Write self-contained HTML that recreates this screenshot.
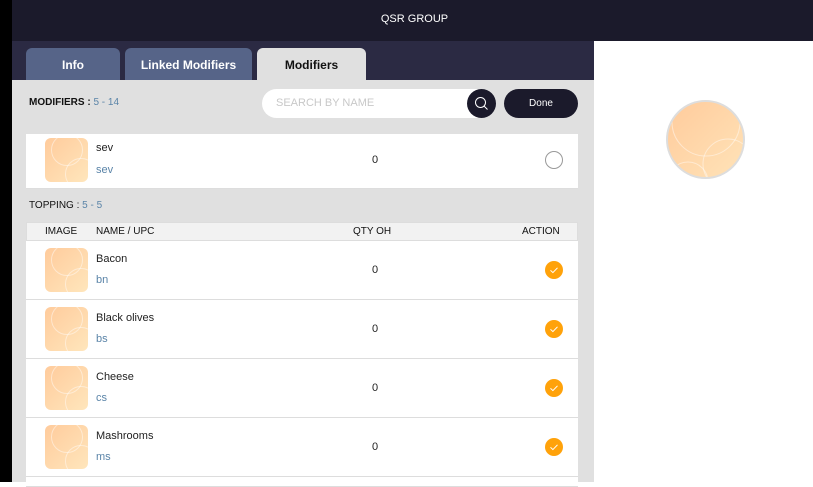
<!DOCTYPE html>
<html><head><style>
*{margin:0;padding:0;box-sizing:border-box}
body{width:813px;height:482px;overflow:hidden;background:#fff;font-family:"Liberation Sans",sans-serif;position:relative}
.abs{position:absolute}
.img{position:absolute;width:43px;height:44px;border-radius:6px;background:linear-gradient(135deg,#ffcb9c,#ffe6bc);overflow:hidden}
.img::before{content:"";position:absolute;left:6px;top:-4px;width:30px;height:30px;border:1px solid rgba(255,255,255,.45);border-radius:50%}
.img::after{content:"";position:absolute;left:20px;top:20px;width:30px;height:30px;border:1px solid rgba(255,255,255,.45);border-radius:50%}
.row{position:absolute;left:26px;width:552px;background:#fff;border-bottom:1px solid #ddd}
.name{position:absolute;left:70px;font-size:11px;color:#222}
.upc{position:absolute;left:70px;font-size:11px;color:#5a84a8}
.qty{position:absolute;left:346px;font-size:11px;color:#222}
.chk{position:absolute;left:519px;width:18px;height:18px;border-radius:50%;background:#ffa20a}
</style></head><body>
<div class="abs" style="left:0;top:0;width:12px;height:482px;background:#000"></div>
<div class="abs" style="left:12px;top:0;width:801px;height:41px;background:#1b1a2b"></div>
<div class="abs" style="left:0;top:13px;width:813px;text-align:center;padding-left:16px;color:#fff;font-size:11px">QSR GROUP</div>
<div class="abs" style="left:12px;top:41px;width:582px;height:39px;background:#2b2a43"></div>
<div class="abs" style="left:26px;top:48px;width:94px;height:32px;background:#566488;border-radius:6px 6px 0 0;color:#fff;font-size:12px;font-weight:bold;text-align:center;line-height:34px">Info</div>
<div class="abs" style="left:125px;top:48px;width:127px;height:32px;background:#566488;border-radius:6px 6px 0 0;color:#fff;font-size:12px;font-weight:bold;text-align:center;line-height:34px">Linked Modifiers</div>
<div class="abs" style="left:257px;top:48px;width:109px;height:32px;background:#e0e0e0;border-radius:6px 6px 0 0;color:#111;font-size:12px;font-weight:bold;text-align:center;line-height:34px">Modifiers</div>
<div class="abs" style="left:12px;top:80px;width:582px;height:402px;background:#e0e0e0"></div>
<div class="abs" style="left:29px;top:97px;font-size:10px;font-weight:bold;color:#111">MODIFIERS : <span style="color:#5a84a8;font-weight:normal">5 - 14</span></div>
<div class="abs" style="left:262px;top:89px;width:230px;height:29px;background:#fff;border-radius:15px;color:#c8c8c8;font-size:11px;line-height:29px;padding-left:14px">SEARCH BY NAME</div>
<div class="abs" style="left:467px;top:89px;width:29px;height:29px;background:#1b1a2b;border-radius:50%"><svg width="29" height="29"><circle cx="13.5" cy="13.5" r="5" fill="none" stroke="#fff" stroke-width="1"/><line x1="17" y1="17" x2="20.5" y2="20.5" stroke="#fff" stroke-width="1"/></svg></div>
<div class="abs" style="left:504px;top:89px;width:74px;height:29px;background:#1b1a2b;border-radius:15px;color:#fff;font-size:10px;text-align:center;line-height:29px">Done</div>
<div class="row" style="top:134px;height:55px"><div class="img" style="left:19px;top:4px"></div><div class="name" style="top:8px">sev</div><div class="upc" style="top:30px">sev</div><div class="qty" style="top:20px">0</div><div class="abs" style="left:519px;top:17px;width:18px;height:18px;border:1px solid #999;border-radius:50%"></div></div>
<div class="abs" style="left:29px;top:200px;font-size:10px;color:#111">TOPPING : <span style="color:#5a84a8">5 - 5</span></div>
<div class="abs" style="left:26px;top:222px;width:552px;height:19px;background:#f2f2f2;border:1px solid #ddd;font-size:10px;color:#111;line-height:18px">
<span class="abs" style="left:18px">IMAGE</span><span class="abs" style="left:69px">NAME / UPC</span><span class="abs" style="left:326px">QTY OH</span><span class="abs" style="left:495px">ACTION</span></div>
<div class="row" style="top:241px;height:59px"><div class="img" style="left:19px;top:7px"></div><div class="name" style="top:12px">Bacon</div><div class="upc" style="top:33px">bn</div><div class="qty" style="top:23px">0</div><div class="chk" style="top:20px"><svg width="18" height="18"><path d="M5.5 9.3l2.4 2.3 4.6-4.8" fill="none" stroke="#fff" stroke-width="1"/></svg></div></div>
<div class="row" style="top:300px;height:59px"><div class="img" style="left:19px;top:7px"></div><div class="name" style="top:12px">Black olives</div><div class="upc" style="top:33px">bs</div><div class="qty" style="top:23px">0</div><div class="chk" style="top:20px"><svg width="18" height="18"><path d="M5.5 9.3l2.4 2.3 4.6-4.8" fill="none" stroke="#fff" stroke-width="1"/></svg></div></div>
<div class="row" style="top:359px;height:59px"><div class="img" style="left:19px;top:7px"></div><div class="name" style="top:12px">Cheese</div><div class="upc" style="top:33px">cs</div><div class="qty" style="top:23px">0</div><div class="chk" style="top:20px"><svg width="18" height="18"><path d="M5.5 9.3l2.4 2.3 4.6-4.8" fill="none" stroke="#fff" stroke-width="1"/></svg></div></div>
<div class="row" style="top:418px;height:59px"><div class="img" style="left:19px;top:7px"></div><div class="name" style="top:12px">Mashrooms</div><div class="upc" style="top:33px">ms</div><div class="qty" style="top:23px">0</div><div class="chk" style="top:20px"><svg width="18" height="18"><path d="M5.5 9.3l2.4 2.3 4.6-4.8" fill="none" stroke="#fff" stroke-width="1"/></svg></div></div>
<div class="row" style="top:477px;height:10px"></div>
<div class="abs" style="left:666px;top:100px;width:79px;height:79px;border-radius:50%;border:2px solid #ddd;background:linear-gradient(135deg,#ffcb9c,#ffe3b8);overflow:hidden">
<svg width="79" height="79" style="position:absolute;left:0;top:0"><g fill="none" stroke="rgba(255,255,255,.45)" stroke-width="1"><circle cx="38" cy="20" r="34"/><circle cx="60" cy="62" r="25"/><circle cx="20" cy="80" r="20"/></g></svg></div>
</body></html>
